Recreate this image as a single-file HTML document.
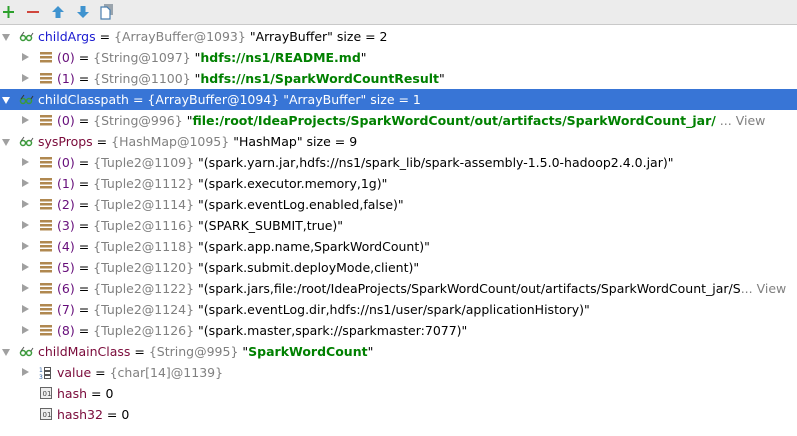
<!DOCTYPE html>
<html><head><meta charset="utf-8"><style>
*{margin:0;padding:0;box-sizing:border-box}
body{width:797px;height:436px;background:#fff;position:relative;overflow:hidden;font-family:"DejaVu Sans",sans-serif;font-size:12.5px;color:#000}
.tb{position:absolute;left:0;top:0;width:797px;height:25px;background:#ececec;border-bottom:1px solid #c9c9c9}
.r{position:absolute;left:0;width:797px;height:21px;line-height:21px;white-space:nowrap;overflow:hidden}
.sel{background:#3875d6;color:#fff}
.sel .g,.sel .n,.sel .b{color:#fff}
.ar{position:absolute;top:6px;width:0;height:0}
.ar.c{border-top:4px solid transparent;border-bottom:4px solid transparent;border-left:7px solid #a0a0a0}
.ar.o{top:8px;border-left:4px solid transparent;border-right:4px solid transparent;border-top:7px solid #a0a0a0}
.sel .ar.o{border-top-color:#fff}
.t{position:absolute;top:0}
.ic{position:absolute;top:4px}
.n{color:#660e7a}
.nb{color:#1a1ad0}
.nm{color:#7a0a3a}
.g{color:#808080}
.s{color:#008000;font-weight:bold}
.v{position:absolute;right:0;top:0;background:#fff;color:#808080;padding-left:3px;width:52px}
</style></head><body>
<div class="tb">
<svg width="797" height="25" style="position:absolute;left:0;top:0">
<rect x="3" y="11" width="11" height="2" fill="#2ca02c"/><rect x="7.5" y="6" width="2" height="12" fill="#2ca02c"/>
<rect x="27" y="11" width="12" height="2" fill="#d0463c"/>
<path d="M58 6 L64 12 L60.5 12 L60.5 18 L55.5 18 L55.5 12 L52 12 Z" fill="#3f93cf"/>
<path d="M83 18 L89 12 L85.5 12 L85.5 6 L80.5 6 L80.5 12 L77 12 Z" fill="#3f93cf"/>
<rect x="104" y="4" width="9" height="11" fill="#9aa4ad"/>
<path d="M101 7 L107 7 L110 10 L110 19 L101 19 Z" fill="#fff" stroke="#4a7fb0" stroke-width="1.2"/>
</svg>
</div>

<div class="r" style="top:26px"><span class="ar o" style="left:2px"></span>
<svg class="ic" style="left:19px" width="15" height="12"><circle cx="4" cy="8" r="2.5" fill="none" stroke="#3a9a3a" stroke-width="1.5"/><circle cx="10" cy="8" r="2.5" fill="none" stroke="#3a9a3a" stroke-width="1.5"/><path d="M2 6 L5 2 M12 6 L14 3" stroke="#555" stroke-width="1"/></svg>
<span class="t" style="left:38px"><span class="nb">childArgs</span> = <span class="g">{ArrayBuffer@1093}</span> "ArrayBuffer" size = 2</span></div>

<div class="r" style="top:47px"><span class="ar c" style="left:22px"></span>
<svg class="ic" style="left:40px" width="12" height="12"><rect x="0" y="1" width="12" height="2.5" fill="#b08850"/><rect x="0" y="5" width="12" height="2.5" fill="#b08850"/><rect x="0" y="9" width="12" height="2.5" fill="#b08850"/></svg>
<span class="t" style="left:57px"><span class="n">(0)</span> = <span class="g">{String@1097}</span> "<span class="s">hdfs://ns1/README.md</span>"</span></div>

<div class="r" style="top:68px"><span class="ar c" style="left:22px"></span>
<svg class="ic" style="left:40px" width="12" height="12"><rect x="0" y="1" width="12" height="2.5" fill="#b08850"/><rect x="0" y="5" width="12" height="2.5" fill="#b08850"/><rect x="0" y="9" width="12" height="2.5" fill="#b08850"/></svg>
<span class="t" style="left:57px"><span class="n">(1)</span> = <span class="g">{String@1100}</span> "<span class="s">hdfs://ns1/SparkWordCountResult</span>"</span></div>

<div class="r sel" style="top:89px"><span class="ar o" style="left:2px"></span>
<svg class="ic" style="left:19px" width="15" height="12"><circle cx="4" cy="8" r="2.5" fill="none" stroke="#3a9a3a" stroke-width="1.5"/><circle cx="10" cy="8" r="2.5" fill="none" stroke="#3a9a3a" stroke-width="1.5"/><path d="M2 6 L5 2 M12 6 L14 3" stroke="#333" stroke-width="1"/></svg>
<span class="t" style="left:38px">childClasspath = {ArrayBuffer@1094} "ArrayBuffer" size = 1</span></div>

<div class="r" style="top:110px"><span class="ar c" style="left:22px"></span>
<svg class="ic" style="left:40px" width="12" height="12"><rect x="0" y="1" width="12" height="2.5" fill="#b08850"/><rect x="0" y="5" width="12" height="2.5" fill="#b08850"/><rect x="0" y="9" width="12" height="2.5" fill="#b08850"/></svg>
<span class="t" style="left:57px"><span class="n">(0)</span> = <span class="g">{String@996}</span> "<span class="s">file:/root/IdeaProjects/SparkWordCount/out/artifacts/SparkWordCount_jar/</span> <span class="g">... View</span></span></div>

<div class="r" style="top:131px"><span class="ar o" style="left:2px"></span>
<svg class="ic" style="left:19px" width="15" height="12"><circle cx="4" cy="8" r="2.5" fill="none" stroke="#3a9a3a" stroke-width="1.5"/><circle cx="10" cy="8" r="2.5" fill="none" stroke="#3a9a3a" stroke-width="1.5"/><path d="M2 6 L5 2 M12 6 L14 3" stroke="#555" stroke-width="1"/></svg>
<span class="t" style="left:38px"><span class="nm">sysProps</span> = <span class="g">{HashMap@1095}</span> "HashMap" size = 9</span></div>

<div class="r" style="top:152px"><span class="ar c" style="left:22px"></span><svg class="ic" style="left:40px" width="12" height="12"><rect x="0" y="1" width="12" height="2.5" fill="#b08850"/><rect x="0" y="5" width="12" height="2.5" fill="#b08850"/><rect x="0" y="9" width="12" height="2.5" fill="#b08850"/></svg><span class="t" style="left:57px"><span class="n">(0)</span> = <span class="g">{Tuple2@1109}</span> "(spark.yarn.jar,hdfs://ns1/spark_lib/spark-assembly-1.5.0-hadoop2.4.0.jar)"</span></div>
<div class="r" style="top:173px"><span class="ar c" style="left:22px"></span><svg class="ic" style="left:40px" width="12" height="12"><rect x="0" y="1" width="12" height="2.5" fill="#b08850"/><rect x="0" y="5" width="12" height="2.5" fill="#b08850"/><rect x="0" y="9" width="12" height="2.5" fill="#b08850"/></svg><span class="t" style="left:57px"><span class="n">(1)</span> = <span class="g">{Tuple2@1112}</span> "(spark.executor.memory,1g)"</span></div>
<div class="r" style="top:194px"><span class="ar c" style="left:22px"></span><svg class="ic" style="left:40px" width="12" height="12"><rect x="0" y="1" width="12" height="2.5" fill="#b08850"/><rect x="0" y="5" width="12" height="2.5" fill="#b08850"/><rect x="0" y="9" width="12" height="2.5" fill="#b08850"/></svg><span class="t" style="left:57px"><span class="n">(2)</span> = <span class="g">{Tuple2@1114}</span> "(spark.eventLog.enabled,false)"</span></div>
<div class="r" style="top:215px"><span class="ar c" style="left:22px"></span><svg class="ic" style="left:40px" width="12" height="12"><rect x="0" y="1" width="12" height="2.5" fill="#b08850"/><rect x="0" y="5" width="12" height="2.5" fill="#b08850"/><rect x="0" y="9" width="12" height="2.5" fill="#b08850"/></svg><span class="t" style="left:57px"><span class="n">(3)</span> = <span class="g">{Tuple2@1116}</span> "(SPARK_SUBMIT,true)"</span></div>
<div class="r" style="top:236px"><span class="ar c" style="left:22px"></span><svg class="ic" style="left:40px" width="12" height="12"><rect x="0" y="1" width="12" height="2.5" fill="#b08850"/><rect x="0" y="5" width="12" height="2.5" fill="#b08850"/><rect x="0" y="9" width="12" height="2.5" fill="#b08850"/></svg><span class="t" style="left:57px"><span class="n">(4)</span> = <span class="g">{Tuple2@1118}</span> "(spark.app.name,SparkWordCount)"</span></div>
<div class="r" style="top:257px"><span class="ar c" style="left:22px"></span><svg class="ic" style="left:40px" width="12" height="12"><rect x="0" y="1" width="12" height="2.5" fill="#b08850"/><rect x="0" y="5" width="12" height="2.5" fill="#b08850"/><rect x="0" y="9" width="12" height="2.5" fill="#b08850"/></svg><span class="t" style="left:57px"><span class="n">(5)</span> = <span class="g">{Tuple2@1120}</span> "(spark.submit.deployMode,client)"</span></div>
<div class="r" style="top:278px"><span class="ar c" style="left:22px"></span><svg class="ic" style="left:40px" width="12" height="12"><rect x="0" y="1" width="12" height="2.5" fill="#b08850"/><rect x="0" y="5" width="12" height="2.5" fill="#b08850"/><rect x="0" y="9" width="12" height="2.5" fill="#b08850"/></svg><span class="t" style="left:57px"><span class="n">(6)</span> = <span class="g">{Tuple2@1122}</span> "(spark.jars,file:/root/IdeaProjects/SparkWordCount/out/artifacts/SparkWordCount_jar/S<span class="g">... View</span></span></div>
<div class="r" style="top:299px"><span class="ar c" style="left:22px"></span><svg class="ic" style="left:40px" width="12" height="12"><rect x="0" y="1" width="12" height="2.5" fill="#b08850"/><rect x="0" y="5" width="12" height="2.5" fill="#b08850"/><rect x="0" y="9" width="12" height="2.5" fill="#b08850"/></svg><span class="t" style="left:57px"><span class="n">(7)</span> = <span class="g">{Tuple2@1124}</span> "(spark.eventLog.dir,hdfs://ns1/user/spark/applicationHistory)"</span></div>
<div class="r" style="top:320px"><span class="ar c" style="left:22px"></span><svg class="ic" style="left:40px" width="12" height="12"><rect x="0" y="1" width="12" height="2.5" fill="#b08850"/><rect x="0" y="5" width="12" height="2.5" fill="#b08850"/><rect x="0" y="9" width="12" height="2.5" fill="#b08850"/></svg><span class="t" style="left:57px"><span class="n">(8)</span> = <span class="g">{Tuple2@1126}</span> "(spark.master,spark://sparkmaster:7077)"</span></div>

<div class="r" style="top:341px"><span class="ar o" style="left:2px"></span>
<svg class="ic" style="left:19px" width="15" height="12"><circle cx="4" cy="8" r="2.5" fill="none" stroke="#3a9a3a" stroke-width="1.5"/><circle cx="10" cy="8" r="2.5" fill="none" stroke="#3a9a3a" stroke-width="1.5"/><path d="M2 6 L5 2 M12 6 L14 3" stroke="#555" stroke-width="1"/></svg>
<span class="t" style="left:38px"><span class="nm">childMainClass</span> = <span class="g">{String@995}</span> "<span class="s">SparkWordCount</span>"</span></div>

<div class="r" style="top:362px"><span class="ar c" style="left:22px"></span>
<svg class="ic" style="left:39px" width="14" height="14"><text x="0" y="6" font-size="6" fill="#3060a0" font-family="DejaVu Sans">1</text><text x="0" y="13" font-size="6" fill="#3060a0" font-family="DejaVu Sans">3</text><rect x="5.5" y="1.5" width="6" height="3" fill="none" stroke="#555"/><rect x="5.5" y="5.5" width="6" height="3" fill="none" stroke="#555"/><rect x="5.5" y="9.5" width="6" height="3" fill="none" stroke="#555"/></svg>
<span class="t" style="left:57px"><span class="nm">value</span> = <span class="g">{char[14]@1139}</span></span></div>

<div class="r" style="top:383px">
<svg class="ic" style="left:40px" width="12" height="12"><rect x="0.5" y="0.5" width="11" height="11" fill="#eee" stroke="#666"/><text x="2.5" y="9" font-size="7" fill="#444" font-family="DejaVu Sans">01</text></svg>
<span class="t" style="left:57px"><span class="nm">hash</span> = 0</span></div>

<div class="r" style="top:404px">
<svg class="ic" style="left:40px" width="12" height="12"><rect x="0.5" y="0.5" width="11" height="11" fill="#eee" stroke="#666"/><text x="2.5" y="9" font-size="7" fill="#444" font-family="DejaVu Sans">01</text></svg>
<span class="t" style="left:57px"><span class="nm">hash32</span> = 0</span></div>
</body></html>
